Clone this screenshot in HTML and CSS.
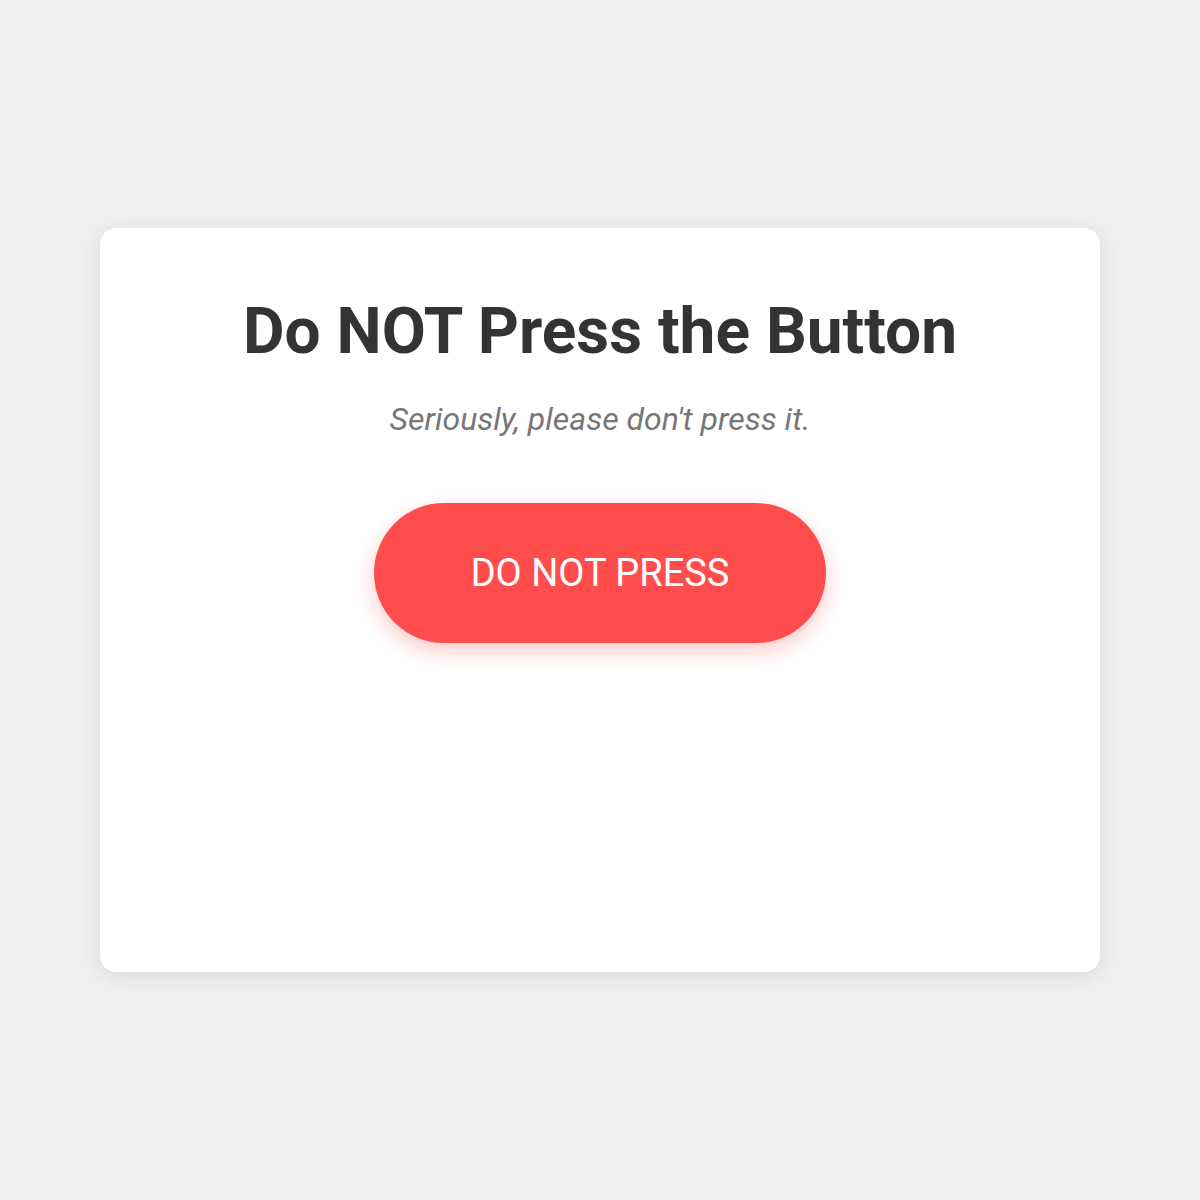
FILE: index.html
```html
<!DOCTYPE html>
<html>
    <head>
        <title>Do NOT Press the Button</title>
        <link rel="stylesheet" href="styles.css">
    </head>
    <body>
        <div class="card">
            <h1 class="title">Do NOT Press the Button</h1>
            <p class="subtitle">Seriously, please don't press it.</p>
            <button class="big-button" type="button">DO NOT PRESS</button>
        </div>
    </body>
</html>
```

FILE: styles.css
```css
:root {
    --bg: #f0f0f0;
    --danger: #ff4d4d;
}

body {
    margin: 0;
    min-height: 100vh;
    display: flex;
    align-items: center;
    justify-content: center;
    font-family: Roboto, "Liberation Sans", sans-serif;
    background-color: var(--bg);
}

.card {
    box-sizing: border-box;
    width: 1000px;
    height: 744px;
    padding: 66px 40px;
    display: flex;
    flex-direction: column;
    align-items: center;
    background-color: #fff;
    border-radius: 16px;
    box-shadow: 0 4px 20px rgba(0, 0, 0, 0.1);
}

.title {
    margin: 0;
    font-size: 64px;
    font-weight: 700;
    color: #333;
}

.subtitle {
    margin: 31px 0 0;
    font-size: 32px;
    font-style: italic;
    color: #777;
}

.big-button {
    margin-top: 65px;
    padding: 48px 97px;
    font-family: inherit;
    font-size: 38px;
    color: #fff;
    background-color: var(--danger);
    border: none;
    border-radius: 80px;
    box-shadow: 0 8px 20px rgba(255, 77, 77, 0.3);
    cursor: pointer;
}
```
